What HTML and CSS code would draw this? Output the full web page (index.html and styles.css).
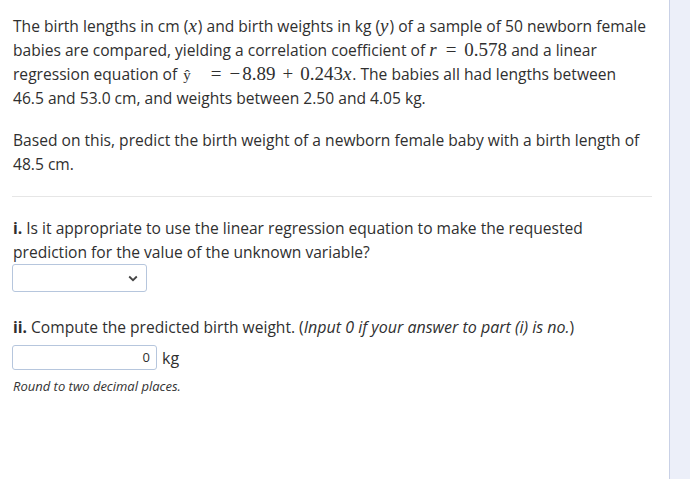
FILE: index.html
```html
<!DOCTYPE html>
<html lang="en">
<head>
    <meta charset="UTF-8">
    <title>Birth Weight Prediction</title>
    <link rel="stylesheet" href="styles.css">
</head>
<body>
    <div class="page">
        <div class="question">
            <p class="stem">The birth lengths in cm (<span class="math"><i>x</i></span>) and birth weights in kg (<span class="math"><i>y</i></span>) of a sample of 50 newborn female babies are compared, yielding a correlation coefficient of <span class="math"><i>r</i><span class="rel">=</span>0.578</span> and a linear regression equation of <span class="math"><span class="hat">ŷ</span><span class="rel">=</span><span class="neg">−</span>8.89<span class="bin">+</span>0.243<i>x</i></span>. The babies all had lengths between 46.5 and 53.0 cm, and weights between 2.50 and 4.05 kg.</p>
            <p class="stem">Based on this, predict the birth weight of a newborn female baby with a birth length of 48.5 cm.</p>

            <hr class="divider">

            <div class="part">
                <p class="prompt"><b>i.</b> Is it appropriate to use the linear regression equation to make the requested prediction for the value of the unknown variable?</p>
                <div class="select-box">
                    <svg class="chevron" width="10" height="7" viewBox="0 0 10 7">
                        <path d="M1.2 1.5 L5 5.2 L8.8 1.5" fill="none" stroke="#444" stroke-width="1.8"/>
                    </svg>
                </div>
            </div>

            <div class="part">
                <p class="prompt"><b>ii.</b> Compute the predicted birth weight. (<i>Input 0 if your answer to part (i) is no.</i>)</p>
                <div class="answer-row">
                    <div class="answer-input">0</div>
                    <span class="unit">kg</span>
                </div>
                <p class="hint">Round to two decimal places.</p>
            </div>
        </div>
        <div class="side-panel"></div>
    </div>
</body>
</html>
```

FILE: styles.css
```css
body {
    margin: 0;
    font-family: "Open Sans", "Noto Sans", sans-serif;
    font-size: 15.6px;
    line-height: 24px;
    color: #2f2f2f;
    background: #fff;
}

.page {
    display: flex;
    height: 479px;
}

.question {
    flex: 1;
    padding: 14px 22px 0 13px;
}

.side-panel {
    width: 20px;
    border-left: 1px solid #c9d1e6;
    background-color: #eceff9;
}

.stem {
    margin: 0 0 18px;
}

/* inline maths, KaTeX-like spacing */
.math {
    font-family: "Liberation Serif", "DejaVu Serif", serif;
    font-size: 19px;
    line-height: 1;
}

.math i {
    padding-right: 1px;
}

.rel {
    margin: 0 8px;
}

.bin {
    margin: 0 7px;
}

.neg {
    margin-right: 2px;
}

.hat {
    font-size: 15px;
    margin-left: 2px;
    margin-right: 12px;
}

.divider {
    border: none;
    border-top: 1px solid #e6e6e6;
    margin: 20px -5px 19px -1px;
}

.part {
    margin-bottom: 23px;
}

.prompt {
    margin: 0;
}

.prompt i {
    font-size: 16px;
}

.select-box {
    position: relative;
    width: 133px;
    height: 26px;
    margin: 0 0 0 -1px;
    border: 1px solid #b6c6dd;
    border-radius: 3px;
}

.chevron {
    position: absolute;
    right: 8px;
    top: 10px;
}

.answer-row {
    display: flex;
    align-items: center;
    gap: 5px;
    margin: 6px 0 0 -1px;
}

.answer-input {
    width: 137px;
    height: 23px;
    padding-right: 6px;
    border: 1px solid #b6c6dd;
    border-radius: 3px;
    text-align: right;
    font-size: 13px;
    line-height: 23px;
}

.unit {
    font-size: 16px;
}

.hint {
    margin: 4px 0 0;
    font-size: 13px;
    font-style: italic;
    color: #333;
}
```
